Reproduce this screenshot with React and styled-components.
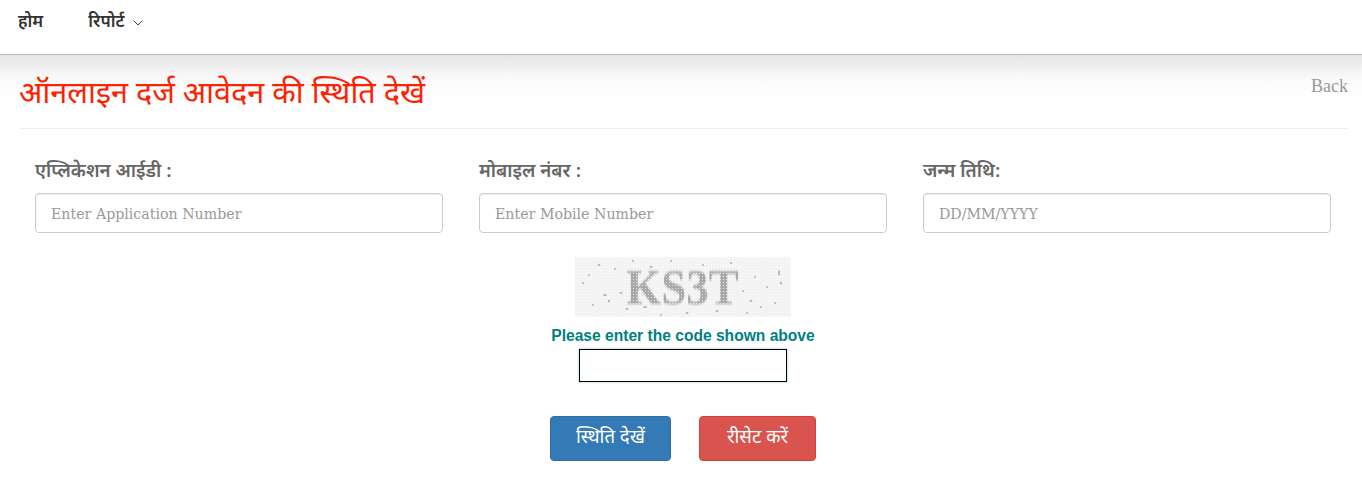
import React from 'react';
import styled, { createGlobalStyle } from 'styled-components';
import { ChevronDown } from 'lucide-react';

const DEVA = '"Noto Sans Devanagari", "Noto Serif Devanagari", "Noto Sans", sans-serif';
const SERIF = '"DejaVu Serif", "Noto Serif Devanagari", serif';

const GlobalStyle = createGlobalStyle`
  * { box-sizing: border-box; }
  body {
    margin: 0;
    background: #fff;
    font-family: ${DEVA};
  }
`;

const Nav = styled.nav`
  height: 55px;
  border-bottom: 1px solid #b9b9b9;
  display: flex;
  align-items: flex-start;
  padding: 11px 0 0 18px;
  gap: 45px;
`;

const NavItem = styled.a`
  display: flex;
  align-items: center;
  gap: 5px;
  font-size: 17.2px;
  line-height: 24px;
  font-weight: 600;
  color: #333;
`;

const Head = styled.div`
  background: linear-gradient(#e6e6e6 0, #fafafa 24px, #fff 42px);
  padding: 0 14px 0 19px;
`;

const TitleRow = styled.div`
  height: 74px;
  border-bottom: 1px solid #eee;
  display: flex;
  justify-content: space-between;
  align-items: flex-start;
`;

const Title = styled.h1`
  margin: 19px 0 0;
  font-size: 30.6px;
  line-height: 44px;
  font-weight: 400;
  color: #ff2000;
`;

const Back = styled.a`
  margin-top: 20px;
  font-family: "Liberation Serif", serif;
  font-size: 18px;
  line-height: 22px;
  color: #999;
`;

const Fields = styled.div`
  display: grid;
  grid-template-columns: repeat(3, 408px);
  gap: 36px;
  padding: 31px 0 0 35px;
`;

const Field = styled.div`
  display: flex;
  flex-direction: column;
  gap: 7px;
`;

const Label = styled.label`
  font-size: 18.7px;
  line-height: 26px;
  font-weight: 600;
  color: #666;
`;

const TextInput = styled.input`
  height: 40px;
  padding: 2px 15px 0;
  border: 1px solid #ccc;
  border-radius: 4px;
  box-shadow: inset 0 1px 1px rgba(0, 0, 0, 0.075);
  font-family: ${SERIF};
  font-size: 14.2px;
  outline: none;

  &::placeholder {
    color: #999;
    opacity: 1;
  }
`;

const CaptchaBlock = styled.div`
  display: flex;
  flex-direction: column;
  align-items: center;
  margin: 24px 0 0 4px;
`;

const Captcha = styled.div`
  position: relative;
  width: 216px;
  height: 60px;
  display: flex;
  align-items: center;
  justify-content: center;
  overflow: hidden;
  background: #f3f3f3;
  font-family: "Liberation Serif", serif;
  font-size: 50px;
  font-weight: 700;
  color: #a8a8a8;

  &::after {
    content: '';
    position: absolute;
    inset: 0;
    background-image: radial-gradient(rgba(255, 255, 255, 0.7) 0.7px, transparent 1px);
    background-size: 3px 3px;
  }
`;

const CaptchaText = styled.span`
  transform: scaleX(0.9);
  filter: blur(0.8px);
`;

const Speckle = styled.svg`
  position: absolute;
  inset: 0;
  z-index: 1;
  filter: blur(0.5px);
`;

const CodeHint = styled.div`
  margin-top: 10px;
  font-family: "Liberation Sans", sans-serif;
  font-size: 15.6px;
  line-height: 18px;
  font-weight: 700;
  color: #008080;
`;

const CodeInput = styled.input`
  width: 208px;
  height: 33px;
  margin-top: 4px;
  border: 1px solid #000;
  box-shadow: 0 0 2px rgba(0, 128, 128, 0.5);
  outline: none;
`;

const Actions = styled.div`
  display: flex;
  justify-content: center;
  gap: 28px;
  margin: 34px 0 0 4px;
`;

const Button = styled.button`
  width: ${props => props.$width}px;
  height: 45px;
  border: 1px solid ${props => props.$border};
  border-radius: 4px;
  background: ${props => props.$color};
  color: #fff;
  font-family: ${DEVA};
  font-size: 18.6px;
  padding: 0;
`;

// x, y, rx, ry of the noise blots on the captcha
const SPECKS = [
  [14, 18, 1, 1], [24, 8, 1.5, 1], [30, 38, 2, 1], [34, 44, 1, 1.5], [40, 12, 1, 1], [46, 36, 1.5, 1],
  [18, 48, 1, 1], [8, 26, 1, 1], [52, 52, 1.5, 1], [58, 4, 1, 1], [62, 24, 1, 1], [70, 50, 2, 1],
  [76, 10, 1.5, 1], [96, 4, 1, 1], [112, 56, 1.5, 1], [128, 8, 1, 1], [142, 54, 1.5, 1], [156, 6, 1, 1],
  [176, 44, 1.5, 1], [180, 20, 1, 1], [186, 50, 1, 1], [192, 30, 1, 1], [204, 16, 1, 3], [206, 26, 1, 1.5],
  [200, 46, 1, 1], [168, 34, 1, 1], [86, 58, 1, 1], [172, 56, 1, 1],
];

export default function App() {
  return (
    <>
      <GlobalStyle />
      <Nav>
        <NavItem>होम</NavItem>
        <NavItem>
          रिपोर्ट <ChevronDown size={16} strokeWidth={1.5} color="#444" />
        </NavItem>
      </Nav>
      <Head>
        <TitleRow>
          <Title>ऑनलाइन दर्ज आवेदन की स्थिति देखें</Title>
          <Back>Back</Back>
        </TitleRow>
      </Head>
      <Fields>
        <Field>
          <Label>एप्लिकेशन आईडी :</Label>
          <TextInput placeholder="Enter Application Number" />
        </Field>
        <Field>
          <Label>मोबाइल नंबर :</Label>
          <TextInput placeholder="Enter Mobile Number" />
        </Field>
        <Field>
          <Label>जन्म तिथि:</Label>
          <TextInput placeholder="DD/MM/YYYY" />
        </Field>
      </Fields>
      <CaptchaBlock>
        <Captcha>
          <CaptchaText>KS3T</CaptchaText>
          <Speckle width="216" height="60">
            {SPECKS.map(([x, y, rx, ry]) => (
              <ellipse key={`${x}-${y}`} cx={x} cy={y} rx={rx} ry={ry} fill="#b4b4b4" />
            ))}
          </Speckle>
        </Captcha>
        <CodeHint>Please enter the code shown above</CodeHint>
        <CodeInput />
      </CaptchaBlock>
      <Actions>
        <Button $width={121} $color="#337ab7" $border="#2e6da4">स्थिति देखें</Button>
        <Button $width={117} $color="#d9534f" $border="#d43f3a">रीसेट करें</Button>
      </Actions>
    </>
  );
}
